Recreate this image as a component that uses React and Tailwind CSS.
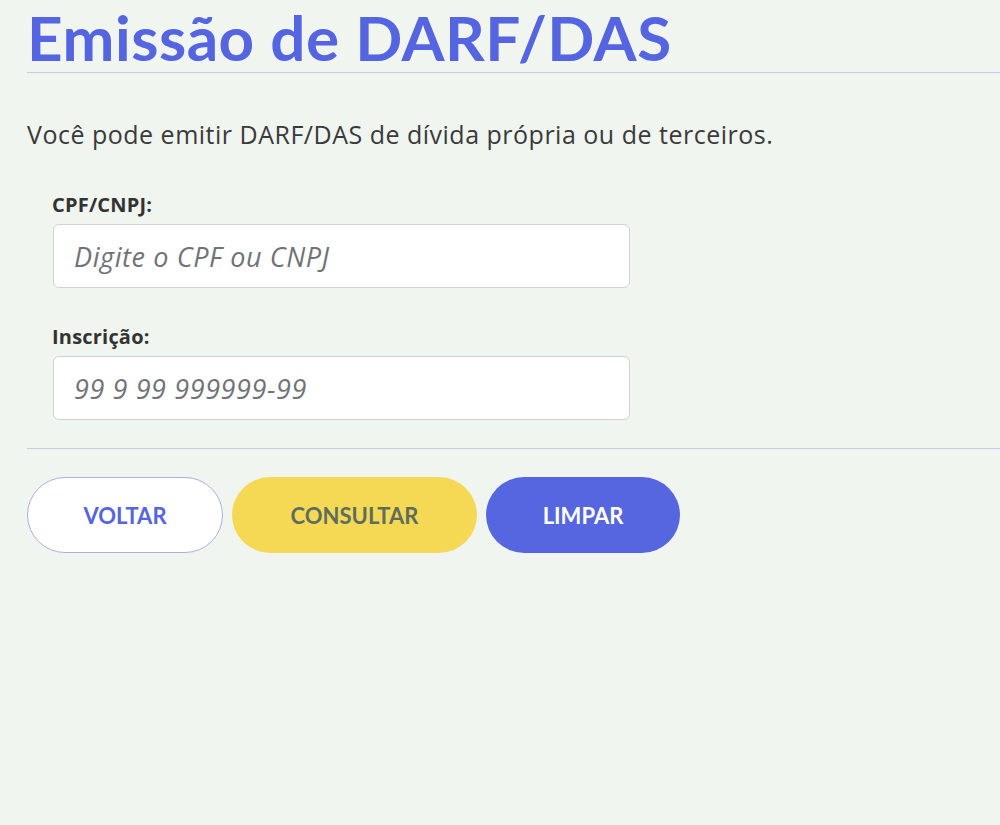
import React from "react";

export default function App() {
  return (
    <div className="min-h-[825px] w-full bg-[#f0f5f0] font-['Open_Sans','Noto_Sans',sans-serif] overflow-hidden">
      <div className="pl-[27px]">
        <h1 className="pt-[2px] font-['Lato','Open_Sans',sans-serif] text-[62px] leading-[70px] font-bold text-[#5564e0] tracking-[0.5px]">
          Emissão de DARF/DAS
        </h1>
        <div className="border-t border-[#c5c9ec]" />

        <p className="mt-[46px] text-[25px] leading-[30px] tracking-[0.5px] text-[#3a3a3a]">
          Você pode emitir DARF/DAS de dívida própria ou de terceiros.
        </p>

        <div className="mt-[44px] pl-[25px] w-[603px]">
          <label className="block text-[20px] leading-[24px] font-bold text-[#333] tracking-[0.2px]">
            CPF/CNPJ:
          </label>
          <input
            type="text"
            placeholder="Digite o CPF ou CNPJ"
            className="mt-[7px] block w-[577px] h-[64px] ml-px rounded-[6px] border border-[#cfd3d3] bg-white px-[20px] text-[27px] italic tracking-[0.6px] text-[#555] placeholder:text-[#6f7378] outline-none"
          />

          <label className="mt-[37px] block text-[20px] leading-[24px] font-bold text-[#333] tracking-[0.2px]">
            Inscrição:
          </label>
          <input
            type="text"
            placeholder="99 9 99 999999-99"
            className="mt-[7px] block w-[577px] h-[64px] ml-px rounded-[6px] border border-[#cfd3d3] bg-white px-[20px] text-[27px] italic tracking-[0.6px] text-[#555] placeholder:text-[#6f7378] outline-none"
          />
        </div>

        <div className="mt-[28px] border-t border-[#c5c9ec]" />

        <div className="mt-[28px] flex gap-[9px] font-['Lato','Open_Sans',sans-serif]">
          <button className="w-[196px] h-[76px] rounded-full border border-[#a9aee8] bg-white text-[22px] font-bold text-[#5564e0]">
            VOLTAR
          </button>
          <button className="w-[245px] h-[76px] rounded-full bg-[#f5d955] text-[22px] font-bold text-[#5e6e5e]">
            CONSULTAR
          </button>
          <button className="w-[194px] h-[76px] rounded-full bg-[#5566e0] text-[22px] font-bold text-white">
            LIMPAR
          </button>
        </div>
      </div>
    </div>
  );
}
